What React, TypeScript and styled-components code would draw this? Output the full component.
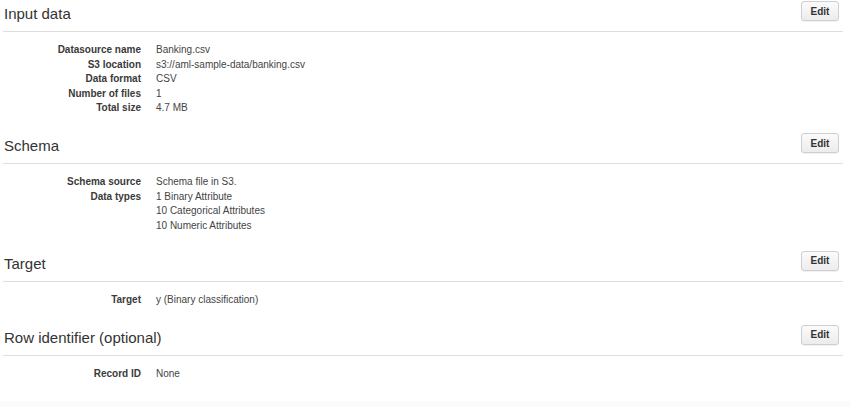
import React from "react";
import styled, { createGlobalStyle } from "styled-components";

const GlobalStyle = createGlobalStyle`
  html, body {
    margin: 0;
    padding: 0;
    background: #ffffff;
  }
  body {
    font-family: "Liberation Sans", Arial, Helvetica, sans-serif;
    color: #333;
  }
`;

const Page = styled.div`
  padding: 0 7px 0 3px;
`;

const Section = styled.section`
  display: flex;
  flex-direction: column;
`;

const Header = styled.div`
  display: flex;
  justify-content: space-between;
  align-items: flex-start;
  height: 31px;
  border-bottom: 1px solid #dedede;
`;

const Title = styled.h2`
  margin: 4px 0 0 1px;
  font-size: 15px;
  line-height: 20px;
  font-weight: normal;
  color: #333;
`;

const EditButton = styled.button`
  margin: 1px 4px 0 0;
  height: 20px;
  width: 38px;
  padding: 0;
  border: 1px solid #cfcfcf;
  border-radius: 3px;
  background: linear-gradient(#fbfbfb, #ececec);
  box-shadow: 0 1px 1px rgba(0, 0, 0, 0.06);
  font-family: "Liberation Sans", Arial, sans-serif;
  font-size: 10px;
  font-weight: bold;
  color: #333;
  cursor: pointer;
`;

const List = styled.dl`
  margin: 0;
  padding: 11px 0 16.5px;
  display: grid;
  grid-template-columns: 138px 1fr;
  column-gap: 15px;
  font-size: 10px;
  line-height: 14.5px;
`;

const Label = styled.dt`
  grid-column: 1;
  text-align: right;
  font-weight: bold;
  color: #3a3a3a;
`;

const Value = styled.dd`
  grid-column: 2;
  margin: 0;
  color: #444;
`;

const Footer = styled.div`
  margin-top: 3px;
  height: 20px;
  background: #fbfbfb;
`;

type Row = { label: string; values: string[] };
type SectionData = { title: string; rows: Row[] };

const sections: SectionData[] = [
  {
    title: "Input data",
    rows: [
      { label: "Datasource name", values: ["Banking.csv"] },
      { label: "S3 location", values: ["s3://aml-sample-data/banking.csv"] },
      { label: "Data format", values: ["CSV"] },
      { label: "Number of files", values: ["1"] },
      { label: "Total size", values: ["4.7 MB"] },
    ],
  },
  {
    title: "Schema",
    rows: [
      { label: "Schema source", values: ["Schema file in S3."] },
      {
        label: "Data types",
        values: [
          "1 Binary Attribute",
          "10 Categorical Attributes",
          "10 Numeric Attributes",
        ],
      },
    ],
  },
  {
    title: "Target",
    rows: [{ label: "Target", values: ["y (Binary classification)"] }],
  },
  {
    title: "Row identifier (optional)",
    rows: [{ label: "Record ID", values: ["None"] }],
  },
];

export default function App() {
  return (
    <>
      <GlobalStyle />
      <Page>
        {sections.map((s) => (
          <Section key={s.title}>
            <Header>
              <Title>{s.title}</Title>
              <EditButton type="button">Edit</EditButton>
            </Header>
            <List>
              {s.rows.map((r) => (
                <React.Fragment key={r.label}>
                  <Label style={{ gridRow: `span ${r.values.length}` }}>
                    {r.label}
                  </Label>
                  {r.values.map((v) => (
                    <Value key={v}>{v}</Value>
                  ))}
                </React.Fragment>
              ))}
            </List>
          </Section>
        ))}
      </Page>
      <Footer />
    </>
  );
}
